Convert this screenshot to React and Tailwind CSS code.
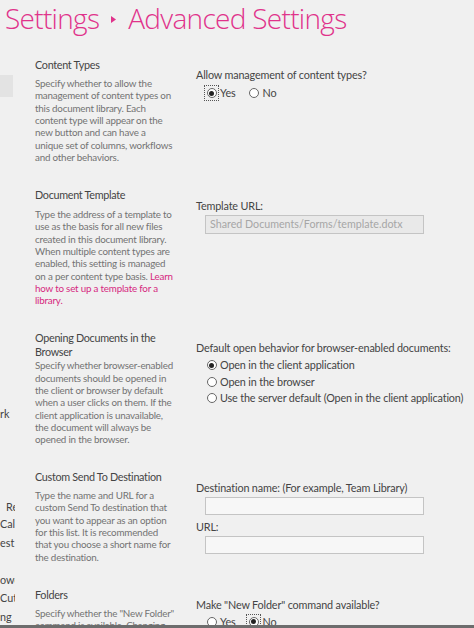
import { useState } from 'react'

const navItems = [
  { text: 'rk', cls: 'mt-[310px]' },
  { text: 'Re', cls: 'mt-[79px] pl-[6px]' },
  { text: 'Calr', cls: 'mt-[3px]' },
  { text: 'est', cls: 'mt-[5px]' },
  { text: 'owc', cls: 'mt-[23px]' },
  { text: 'Cutl', cls: 'mt-[4px]' },
  { text: 'ng', cls: 'mt-[5px]' },
]

const label = 'text-[10.8px] tracking-[-0.15px] leading-[14px] text-[#444] whitespace-nowrap'

function Radio({ checked, focused, text, onClick }) {
  return (
    <label className="flex items-center cursor-pointer" onClick={onClick}>
      <span className={`w-[15px] h-[16px] flex items-center justify-center ${focused ? 'outline outline-1 outline-dotted outline-[#555] -outline-offset-1' : ''}`}>
        <span className="w-[10px] h-[10px] rounded-full border border-[#666] bg-white flex items-center justify-center">
          {checked && <span className="w-[5px] h-[5px] rounded-full bg-[#222]"/>}
        </span>
      </span>
      <span className={`ml-[1px] ${label}`}>{text}</span>
    </label>
  )
}

function TextBox({ value = '', disabled, h = 'h-[18px]' }) {
  return (
    <div className={`ml-[9px] w-[219px] ${h} border border-[#c4c4c4] ${disabled ? 'bg-[#e9e9e9]' : 'bg-[#f7f7f7]'} flex items-center px-[4px] text-[10.7px] text-[#a6a6a6] whitespace-nowrap overflow-hidden`}>
      {value}
    </div>
  )
}

function Section({ title, lines, descMt = 'mt-[5px]', children }) {
  return (
    <div className="flex pb-[24.5px]">
      <div className="w-[161px] shrink-0">
        <div className="text-[10.8px] tracking-[-0.3px] leading-[14px] text-[#444]">
          {title.map((t, i) => <div key={i} className="whitespace-nowrap">{t}</div>)}
        </div>
        <div className={`${descMt} text-[9.8px] tracking-[-0.2px] leading-[12.35px] text-[#737373]`}>
          {lines.map((l, i) => <div key={i} className="whitespace-nowrap">{l}</div>)}
        </div>
      </div>
      <div className="flex-1 min-w-0">{children}</div>
    </div>
  )
}

export default function App() {
  const [ct, setCt] = useState('yes')
  const [openMode, setOpenMode] = useState('client')
  const [folder, setFolder] = useState('no')

  return (
    <div className="w-[474px] h-[628px] bg-[#f0f0f0] overflow-hidden flex flex-col font-['Lato',sans-serif]">
      <h1 className="pl-[5px] h-[36px] shrink-0 flex items-center gap-[12px] font-['Open_Sans',sans-serif] text-[28px] tracking-[-0.7px] leading-[36px] font-light text-[#e0338b] whitespace-nowrap">
        <span>Settings</span>
        <svg width="5" height="7" viewBox="0 0 5 7" className="mt-[3px]"><path d="M0 0 L5 3.5 L0 7 Z" fill="#e0338b"/></svg>
        <span>Advanced Settings</span>
      </h1>

      <div className="flex flex-1 min-h-0 overflow-hidden">
        {/* clipped left navigation */}
        <nav className="w-[15px] shrink-0 flex flex-col overflow-hidden text-[10.8px] leading-[14px] text-[#444]">
          <div className="mt-[39px] h-[22px] w-[13px] bg-[#e3e3e3]"/>
          {navItems.map((n, i) => (
            <div key={i} className={`${n.cls} whitespace-nowrap`}>{n.text}</div>
          ))}
        </nav>

        <main className="pl-[20px] pt-[22px] flex-1 min-w-0">
          <Section title={['Content Types']} lines={[
            'Specify whether to allow the',
            'management of content types on',
            'this document library. Each',
            'content type will appear on the',
            'new button and can have a',
            'unique set of columns, workflows',
            'and other behaviors.',
          ]}>
            <div className="pt-[10px]">
              <div className={label}>Allow management of content types?</div>
              <div className="mt-[3px] ml-[8px] flex items-center gap-[11px]">
                <Radio text="Yes" checked={ct === 'yes'} focused onClick={() => setCt('yes')}/>
                <Radio text="No" checked={ct === 'no'} onClick={() => setCt('no')}/>
              </div>
            </div>
          </Section>

          <Section title={['Document Template']} descMt="mt-[6px]" lines={[
            'Type the address of a template to',
            'use as the basis for all new files',
            'created in this document library.',
            'When multiple content types are',
            'enabled, this setting is managed',
            <>on a per content type basis. <a href="#" className="text-[#d6287f]">Learn</a></>,
            <a href="#" className="text-[#d6287f]">how to set up a template for a</a>,
            <a href="#" className="text-[#d6287f]">library.</a>,
          ]}>
            <div className="pt-[11px]">
              <div className={label}>Template URL:</div>
              <div className="mt-[2px]">
                <TextBox disabled value="Shared Documents/Forms/template.dotx" h="h-[19px]"/>
              </div>
            </div>
          </Section>

          <Section title={['Opening Documents in the', 'Browser']} descMt="mt-0" lines={[
            'Specify whether browser-enabled',
            'documents should be opened in',
            'the client or browser by default',
            'when a user clicks on them. If the',
            'client application is unavailable,',
            'the document will always be',
            'opened in the browser.',
          ]}>
            <div className="pt-[10px]">
              <div className={label}>Default open behavior for browser-enabled documents:</div>
              <div className="mt-[2px] ml-[8px] flex flex-col gap-[0.5px]">
                <Radio text="Open in the client application" checked={openMode === 'client'} onClick={() => setOpenMode('client')}/>
                <Radio text="Open in the browser" checked={openMode === 'browser'} onClick={() => setOpenMode('browser')}/>
                <Radio text="Use the server default (Open in the client application)" checked={openMode === 'server'} onClick={() => setOpenMode('server')}/>
              </div>
            </div>
          </Section>

          <Section title={['Custom Send To Destination']} lines={[
            'Type the name and URL for a',
            'custom Send To destination that',
            'you want to appear as an option',
            'for this list. It is recommended',
            'that you choose a short name for',
            'the destination.',
          ]}>
            <div className="pt-[11px]">
              <div className={label}>Destination name: (For example, Team Library)</div>
              <div className="mt-[2px]"><TextBox/></div>
              <div className={`mt-[5px] ${label}`}>URL:</div>
              <div className="mt-[2px]"><TextBox/></div>
            </div>
          </Section>

          <Section title={['Folders']} lines={[
            'Specify whether the "New Folder"',
            'command is available. Changing',
          ]}>
            <div className="pt-[10px]">
              <div className={label}>Make "New Folder" command available?</div>
              <div className="mt-[2px] ml-[8px] flex items-center gap-[11px]">
                <Radio text="Yes" checked={folder === 'yes'} onClick={() => setFolder('yes')}/>
                <Radio text="No" checked={folder === 'no'} focused onClick={() => setFolder('no')}/>
              </div>
            </div>
          </Section>
        </main>
      </div>

      <div className="h-[3px] shrink-0 bg-[#6d6d6d]"/>
    </div>
  )
}
